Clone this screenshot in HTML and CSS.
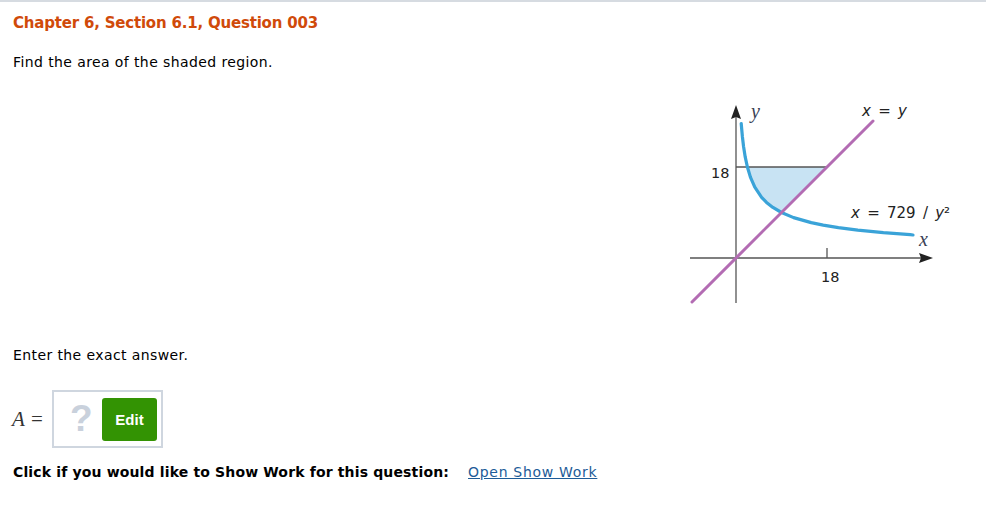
FILE: index.html
```html
<!DOCTYPE html>
<html>
<head>
<meta charset="utf-8">
<link rel="stylesheet" href="styles.css">
</head>
<body>
<div class="page">
  <h1 class="title">Chapter 6, Section 6.1, Question 003</h1>
  <p class="prompt">Find the area of the shaded region.</p>
  <div class="figure-row">
    <svg class="figure" width="290" height="220" viewBox="0 0 290 220" xmlns="http://www.w3.org/2000/svg">
      <polygon class="shade" points="101.5,122.5 92.9,117.4 86.5,112.4 81.6,107.3 74.8,97.2 70.4,87.1 67.4,77 147,77"/>
      <line class="axis" x1="56" y1="26" x2="56" y2="213"/>
      <polygon class="arrow" points="56,15 51,29 56,27 61,29"/>
      <line class="axis" x1="10" y1="168" x2="242" y2="168"/>
      <polygon class="arrow" points="253,168 239,163 241,168 239,173"/>
      <line class="axis" x1="147" y1="158" x2="147" y2="168"/>
      <line class="axis" x1="56" y1="77" x2="147" y2="77"/>
      <polyline class="curve" points="61.2,33.5 62.4,46.7 63.6,56.8 65.2,66.9 67.4,77 70.4,87.1 74.8,97.2 81.6,107.3 86.5,112.4 92.9,117.4 101.5,122.5 113.6,127.6 131.2,132.6 143.2,135.1 158.4,137.7 177.8,140.2 203.4,142.7 230.2,144.7 233,145"/>
      <line class="diag" x1="12" y1="212" x2="193" y2="31"/>
      <text class="lbl num" x="31" y="88">18</text>
      <text class="lbl num" x="141" y="192">18</text>
      <text class="lbl" x="182" y="26"><tspan class="it">x</tspan> = <tspan class="it">y</tspan></text>
      <text class="lbl" x="171" y="128"><tspan class="it">x</tspan> = 729 / <tspan class="it">y</tspan>²</text>
      <text class="var" x="239" y="156">x</text>
      <text class="var" x="71" y="28">y</text>
    </svg>
  </div>
  <p class="instr">Enter the exact answer.</p>
  <div class="answer">
    <span class="avar"><i>A</i> =</span>
    <div class="answer-box">
      <span class="qmark">?</span>
      <span class="edit">Edit</span>
    </div>
  </div>
  <p class="showwork"><b>Click if you would like to Show Work for this question:</b><a class="swlink" href="#">Open Show Work</a></p>
</div>
</body>
</html>
```
FILE: styles.css
```css
html, body {
  margin: 0;
  padding: 0;
  background: #fff;
}
body {
  font-family: "DejaVu Sans", Verdana, sans-serif;
  font-size: 14px;
  letter-spacing: 0.4px;
  color: #000;
}
.page {
  border-top: 2px solid #d6dbe1;
  padding: 0 13px;
  height: 521px;
}
.title {
  margin: 0;
  padding-top: 12px;
  font-size: 15px;
  letter-spacing: -0.2px;
  font-weight: bold;
  color: #d04a0a;
  line-height: 18px;
}
.prompt {
  margin: 0;
  padding-top: 22px;
  line-height: 16px;
}
.figure-row {
  display: flex;
  justify-content: flex-end;
  margin-top: 20px;
  margin-right: 3px;
}
.figure {
  display: block;
  letter-spacing: 0;
}
.shade { fill: #c8e3f3; }
.axis { stroke: #555; stroke-width: 1.3; }
.arrow { fill: #222; }
.curve { fill: none; stroke: #3aa3d8; stroke-width: 3.2; stroke-linecap: round; stroke-linejoin: round; }
.diag { stroke: #b36cb3; stroke-width: 3; stroke-linecap: round; }
.lbl { font-family: "DejaVu Sans", sans-serif; font-size: 15px; word-spacing: 2.5px; fill: #222; }
.num { font-size: 14.5px; word-spacing: 0; }
.it { font-style: italic; }
.var { font-family: "Liberation Serif", serif; font-style: italic; font-size: 20px; fill: #3a3f55; }
.instr {
  margin: 0;
  padding-top: 37px;
  line-height: 16px;
}
.answer {
  display: flex;
  align-items: center;
  margin-top: 27px;
  margin-left: -1px;
}
.avar {
  font-family: "Liberation Serif", serif;
  font-size: 21px;
  letter-spacing: 0;
  word-spacing: 1px;
  color: #333;
  width: 40px;
}
.answer-box {
  display: flex;
  align-items: center;
  border: 2px solid #cfd6df;
  width: 107px;
  height: 54px;
  box-sizing: content-box;
  letter-spacing: 0;
}
.qmark {
  font-family: "Liberation Sans", Arial, sans-serif;
  font-weight: bold;
  font-size: 37px;
  color: #c9d1dc;
  margin-left: 16px;
  width: 32px;
}
.edit {
  display: flex;
  align-items: center;
  justify-content: center;
  width: 55px;
  height: 43px;
  background: #339303;
  border-radius: 3px;
  color: #fff;
  font-family: "Liberation Sans", Arial, sans-serif;
  font-weight: bold;
  font-size: 15px;
}
.showwork {
  margin: 0;
  padding-top: 16px;
  line-height: 16px;
}
.showwork b {
  letter-spacing: 0.15px;
}
.swlink {
  margin-left: 19px;
  letter-spacing: 0.7px;
  color: #1d5c98;
}
```
